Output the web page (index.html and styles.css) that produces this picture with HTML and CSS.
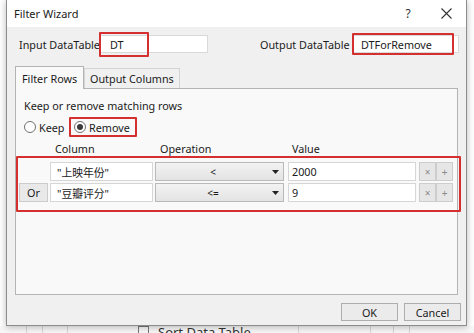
FILE: index.html
```html
<!DOCTYPE html>
<html>
<head>
<meta charset="utf-8">
<link rel="stylesheet" href="styles.css">
</head>
<body>
<div class="screen">
  <div class="dialog">
    <div class="titlebar">
      <span class="title">Filter Wizard</span>
      <span class="help">?</span>
      <svg class="close" width="11" height="11" viewBox="0 0 11 11"><path d="M0.5 0.5 L10.5 10.5 M10.5 0.5 L0.5 10.5" stroke="#333" stroke-width="1.1" fill="none"/></svg>
    </div>
    <div class="body">
      <div class="io-row">
        <span class="io-label lbl-in">Input DataTable</span>
        <div class="field field-in"><span>DT</span><i class="mark mark-in"></i></div>
        <div class="spacer"></div>
        <span class="io-label lbl-out">Output DataTable</span>
        <div class="field field-out"><span>DTForRemove</span><i class="mark mark-out"></i></div>
      </div>
      <div class="tabs">
        <div class="tab active">Filter Rows</div>
        <div class="tab other">Output Columns</div>
      </div>
      <div class="panel">
        <div class="caption">Keep or remove matching rows</div>
        <div class="radios">
          <span class="radio keep"><span class="dot"></span>Keep</span>
          <span class="radio checked marked"><span class="dot"></span>Remove</span>
        </div>
        <div class="head">
          <span class="h-or"></span>
          <span class="h-col">Column</span>
          <span class="h-op">Operation</span>
          <span class="h-val">Value</span>
        </div>
        <div class="rules">
          <div class="rule">
            <span class="or empty"></span>
            <div class="in in-col">"上映年份"</div>
            <div class="sel"><span class="sel-text">&lt;</span><svg class="arrow" width="7" height="4" viewBox="0 0 7 4"><path d="M0 0 H7 L3.5 4 Z" fill="#222"/></svg></div>
            <div class="in in-val">2000</div>
            <span class="sq">×</span><span class="sq">+</span>
          </div>
          <div class="rule">
            <span class="or">Or</span>
            <div class="in in-col">"豆瓣评分"</div>
            <div class="sel"><span class="sel-text">&lt;=</span><svg class="arrow" width="7" height="4" viewBox="0 0 7 4"><path d="M0 0 H7 L3.5 4 Z" fill="#222"/></svg></div>
            <div class="in in-val">9</div>
            <span class="sq">×</span><span class="sq">+</span>
          </div>
        </div>
      </div>
      <div class="buttons">
        <span class="btn">OK</span>
        <span class="btn">Cancel</span>
      </div>
    </div>
  </div>
  <div class="behind">
    <span class="b-cell w26"></span>
    <span class="b-cell line w16"></span>
    <span class="b-cell line w25"></span>
    <span class="b-cell line w71"></span>
    <span class="b-icon"></span>
    <span class="b-text">Sort Data Table</span>
    <span class="b-cell line w72"></span>
    <span class="b-cell line w23"></span>
    <span class="b-cell line w16"></span>
    <span class="b-cell line grow"></span>
  </div>
</div>
</body>
</html>
```
FILE: styles.css
```css
body {
  margin: 0;
  background: #ffffff;
  font-family: "Noto Sans", "Noto Sans CJK SC", sans-serif;
  font-size: 10.8px;
  color: #1b1b1b;
}
.screen {
  width: 474px;
  height: 333px;
  overflow: hidden;
}
.dialog {
  margin-left: 6px;
  width: 461px;
  height: 326px;
  box-sizing: border-box;
  border: 1px solid #8c8c8c;
  border-top: none;
  background: #f0f0f0;
  display: flex;
  flex-direction: column;
  box-shadow: 0 1px 7px rgba(0, 0, 0, 0.28);
  position: relative;
  z-index: 1;
}
.titlebar {
  height: 27px;
  background: #ffffff;
  display: flex;
  align-items: center;
  padding-left: 7px;
}
.title {
  flex: 1;
  font-size: 11px;
}
.help {
  width: 12px;
  text-align: center;
  margin-right: 27px;
  color: #333;
  font-size: 12px;
}
.close {
  margin-right: 14px;
}
.body {
  flex: 1;
  padding: 8px 8px 4px;
  display: flex;
  flex-direction: column;
}
.io-row {
  display: flex;
  align-items: center;
  height: 18px;
  margin: 0 -1px 0 4px;
}
.io-label {
  white-space: nowrap;
}
.lbl-in { width: 81px; }
.lbl-out { width: 93px; }
.spacer { flex: 1; }
.field {
  height: 18px;
  box-sizing: border-box;
  border: 1px solid #d9d9d9;
  background: #ffffff;
  display: flex;
  align-items: center;
  position: relative;
}
.field-in { width: 108px; padding-left: 9px; }
.field-out { width: 106px; padding-left: 7px; }
.mark {
  position: absolute;
  box-sizing: border-box;
  border: 2px solid #d3302f;
  border-radius: 1px;
}
.mark-in { left: -2px; top: -4px; width: 50px; height: 25px; }
.mark-out { left: -2px; top: -3px; width: 102px; height: 22px; }

.tabs {
  display: flex;
  align-items: flex-end;
  height: 22px;
  margin-top: 13px;
}
.tab {
  box-sizing: border-box;
  border: 1px solid #d4d4d4;
  border-bottom: none;
  background: #f0f0f0;
  height: 20px;
  display: flex;
  align-items: center;
  white-space: nowrap;
}
.tab.active {
  width: 69px;
  height: 23px;
  margin-bottom: -1px;
  padding-left: 6px;
  background: #f9f9f9;
  border-color: #b4b4b4;
  position: relative;
  z-index: 1;
}
.tab.other {
  width: 96px;
  padding-left: 5px;
}
.panel {
  height: 207px;
  box-sizing: border-box;
  border: 1px solid #b4b4b4;
  background: #f9f9f9;
  padding-top: 9px;
}
.caption {
  line-height: 16px;
  margin-left: 8px;
}
.radios {
  display: flex;
  align-items: center;
  height: 20px;
  margin: 3px 0 0 8px;
}
.radio {
  display: flex;
  align-items: center;
  box-sizing: border-box;
}
.radio.keep { width: 45px; }
.dot {
  width: 12px;
  height: 12px;
  box-sizing: border-box;
  border: 1px solid #707070;
  border-radius: 50%;
  background: #ffffff;
  margin-right: 3px;
  display: flex;
  align-items: center;
  justify-content: center;
}
.radio.checked .dot::after {
  content: "";
  width: 6px;
  height: 6px;
  border-radius: 50%;
  background: #3a3a3a;
}
.radio.marked {
  width: 68px;
  height: 20px;
  border: 2px solid #d3302f;
  border-radius: 1px;
  padding-left: 3px;
}
.head {
  display: flex;
  align-items: center;
  height: 15px;
  margin-top: 4px;
  padding-left: 3px;
}
.h-or { width: 29px; margin-right: 2px; }
.h-col { width: 103px; margin-right: 2px; padding-left: 5px; box-sizing: border-box; }
.h-op { width: 129px; margin-right: 4px; padding-left: 5px; box-sizing: border-box; }
.h-val { padding-left: 4px; }

.rules {
  border: 2px solid #d3302f;
  border-radius: 1px;
  margin-right: -4px;
  padding: 4px 6px 8px 1px;
  display: flex;
  flex-direction: column;
  gap: 2px;
}
.rule {
  display: flex;
  height: 19px;
}
.or {
  width: 29px;
  margin-right: 2px;
  box-sizing: border-box;
  border: 1px solid #cccccc;
  background: #e9e9e9;
  display: flex;
  align-items: center;
  justify-content: center;
}
.or.empty {
  border: none;
  background: transparent;
}
.in {
  box-sizing: border-box;
  border: 1px solid #d6d6d6;
  background: #ffffff;
  display: flex;
  align-items: center;
  white-space: nowrap;
}
.in-col { width: 103px; margin-right: 2px; padding-left: 6px; }
.in-val { width: 128px; margin-right: 3px; padding-left: 3px; }
.sel {
  width: 129px;
  margin-right: 4px;
  box-sizing: border-box;
  border: 1px solid #b9b9b9;
  background: linear-gradient(#f3f3f3, #e3e3e3);
  display: flex;
  align-items: center;
}
.sel-text {
  flex: 1;
  text-align: center;
  font-size: 10px;
}
.arrow {
  margin: 0 4px 0 2px;
}
.sq {
  width: 17px;
  box-sizing: border-box;
  border: 1px solid #cdcdcd;
  background: #e6e6e6;
  color: #8a8a8a;
  font-size: 10px;
  display: flex;
  align-items: center;
  justify-content: center;
}
.buttons {
  display: flex;
  justify-content: flex-end;
  gap: 6px;
  margin: 8px -3px 0 0;
}
.btn {
  width: 57px;
  height: 18px;
  box-sizing: border-box;
  border: 1px solid #adadad;
  background: #ebebeb;
  display: flex;
  align-items: center;
  justify-content: center;
}

.behind {
  height: 7px;
  overflow: hidden;
  display: flex;
  background: #f7f7f7;
}
.b-cell { height: 7px; }
.b-cell.line { border-left: 1px solid #d6d6d6; box-sizing: border-box; }
.w26 { width: 26px; }
.w16 { width: 16px; }
.w25 { width: 25px; }
.w71 { width: 71px; }
.w72 { width: 72px; }
.w23 { width: 23px; }
.grow { flex: 1; }
.b-icon {
  width: 11px;
  height: 10px;
  margin-right: 9px;
  border: 1px solid #777;
  box-sizing: border-box;
}
.b-text {
  width: 140px;
  font-size: 13px;
  line-height: 16px;
  margin-top: -2px;
  white-space: nowrap;
  color: #333;
}
```
